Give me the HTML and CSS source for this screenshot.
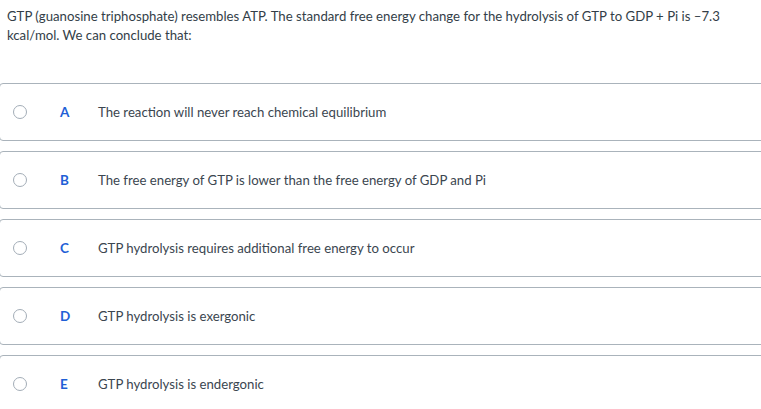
FILE: index.html
```html
<!DOCTYPE html>
<html>
<head>
<meta charset="utf-8">
<link rel="stylesheet" href="styles.css">
</head>
<body>
<div class="question">GTP (guanosine triphosphate) resembles ATP. The standard free energy change for the hydrolysis of GTP to GDP + Pi is –7.3 kcal/mol. We can conclude that:</div>
<div class="options">
  <div class="option"><span class="radio"></span><span class="letter">A</span><span class="text">The reaction will never reach chemical equilibrium</span></div>
  <div class="option"><span class="radio"></span><span class="letter">B</span><span class="text">The free energy of GTP is lower than the free energy of GDP and Pi</span></div>
  <div class="option"><span class="radio"></span><span class="letter">C</span><span class="text">GTP hydrolysis requires additional free energy to occur</span></div>
  <div class="option"><span class="radio"></span><span class="letter">D</span><span class="text">GTP hydrolysis is exergonic</span></div>
  <div class="option"><span class="radio"></span><span class="letter">E</span><span class="text">GTP hydrolysis is endergonic</span></div>
</div>
</body>
</html>
```
FILE: styles.css
```css
html, body {
  margin: 0;
  padding: 0;
  background: #fff;
  overflow: hidden;
}
body {
  font-family: "Lato", "Liberation Sans", sans-serif;
  font-size: 14px;
  color: #333e48;
  width: 761px;
}
.question {
  padding: 7px 30px 0 7px;
  font-size: 13.2px;
  line-height: 19px;
  height: 83px;
  box-sizing: border-box;
}
.options {
  display: flex;
  flex-direction: column;
  gap: 10px;
  margin-left: -1px;
  margin-right: -8px;
}
.option {
  height: 58px;
  box-sizing: border-box;
  border: 1px solid #aab3bb;
  border-radius: 4px;
  display: flex;
  align-items: center;
  padding-left: 13px;
}
.radio {
  width: 14px;
  height: 14px;
  box-sizing: border-box;
  border: 1.5px solid #a3adb7;
  border-radius: 50%;
  flex: none;
}
.letter {
  width: 38px;
  margin-left: 33px;
  font-weight: bold;
  color: #1f5fd6;
  font-size: 13.5px;
}
.text {
  font-size: 13.2px;
  color: #3b4650;
}
```
